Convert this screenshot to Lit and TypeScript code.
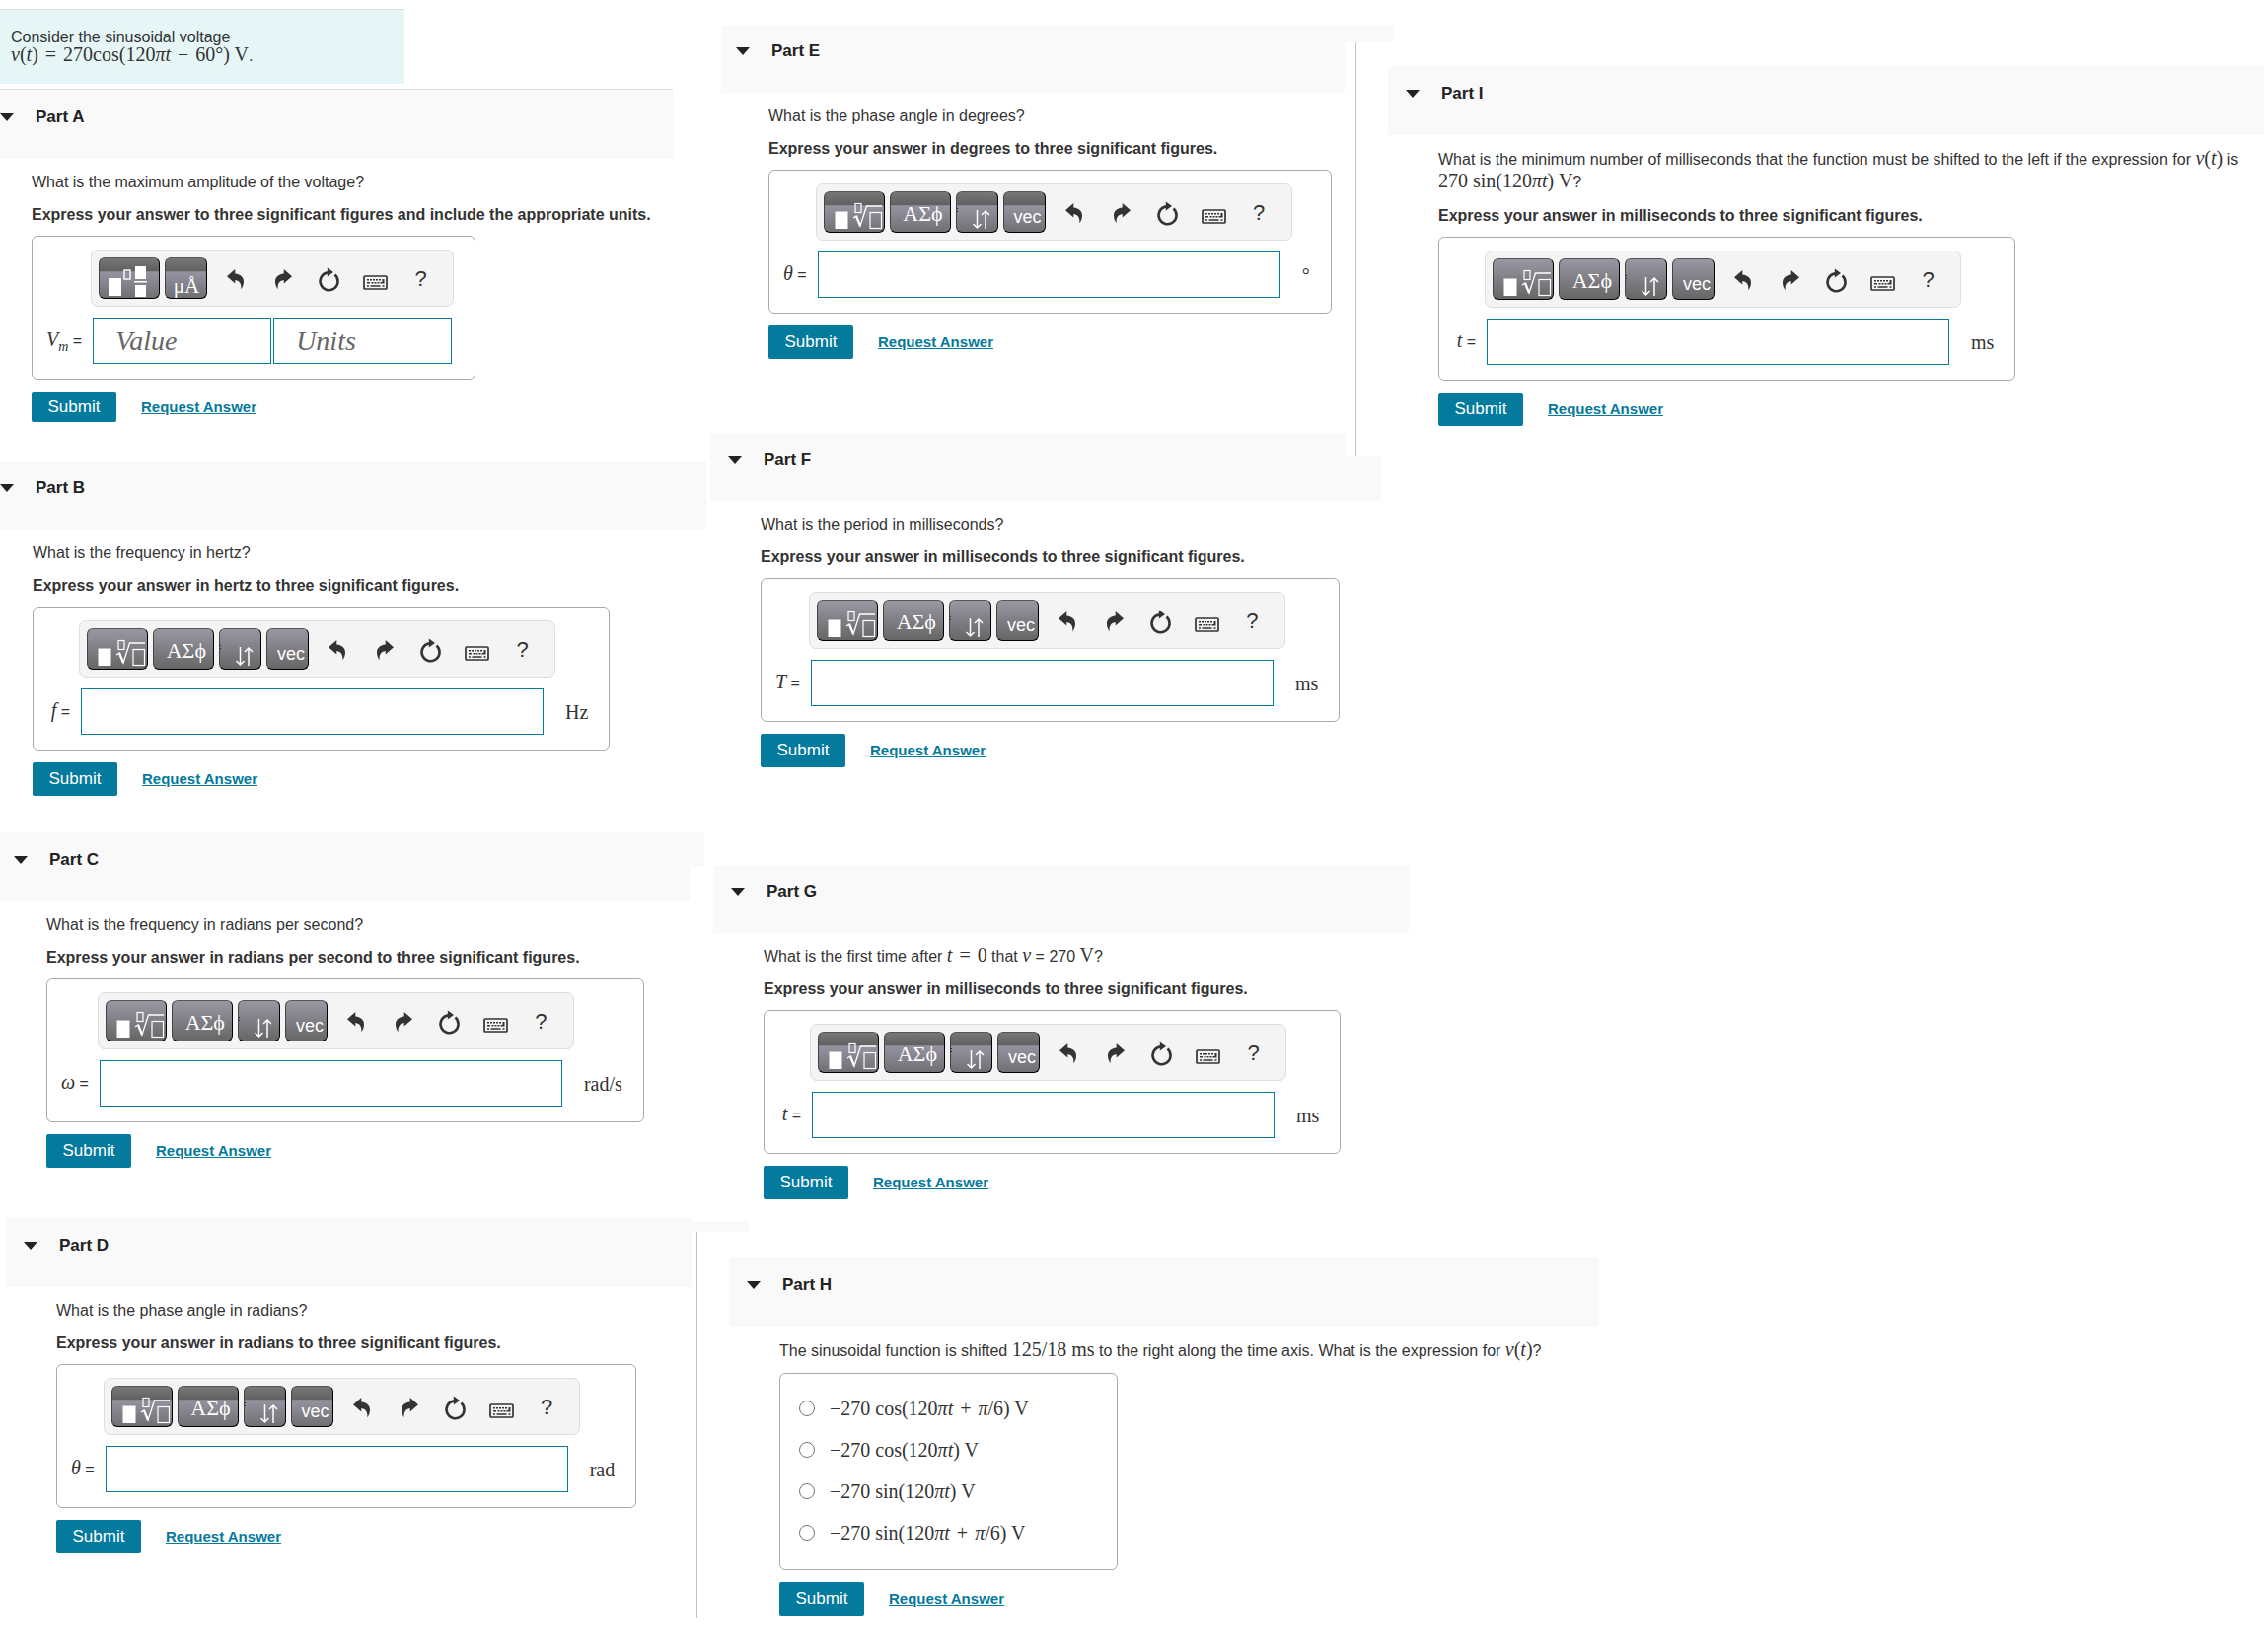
import { LitElement, html, svg, css, nothing, TemplateResult } from "lit";
import { classMap } from "lit/directives/class-map.js";
import { styleMap } from "lit/directives/style-map.js";

interface Part {
  id: string;
  /** Space above the part. */
  gap: number;
  /** Space left of the header band. */
  inset: number;
  /** Width of the header band, out of the width of its column. */
  band: number;
  /** Distance from the band's left edge to the text below it. */
  indent: number;
  question: TemplateResult;
  instruction?: string;
  symbol?: TemplateResult;
  unit?: TemplateResult;
  choices?: TemplateResult[];
  glossy?: boolean;
  tight?: boolean;
  tall?: boolean;
  ruled?: boolean;
  valueUnits?: boolean;
  /** Piece of band that sticks out to the right of the header. */
  tab?: { top: number; width: number; height: number };
  rule?: { left: number; top: number; height: number };
}

const COLUMN_1 = 720;
const COLUMN_2 = 687;
const COLUMN_3 = 888;

/** Relation or operator with the wider spacing of set mathematics. */
const op = (sign: string) => html`<span class="op">${sign}</span>`;

const column1: Part[] = [
  {
    id: "A", gap: 5, inset: 0, band: 682, indent: 32, glossy: true, ruled: true, valueUnits: true,
    question: html`What is the maximum amplitude of the voltage?`,
    instruction: "Express your answer to three significant figures and include the appropriate units.",
    symbol: html`<i>V<sub>m</sub></i>`,
  },
  {
    id: "B", gap: 39, inset: 0, band: 716, indent: 33,
    question: html`What is the frequency in hertz?`,
    instruction: "Express your answer in hertz to three significant figures.",
    symbol: html`<i>f</i>`,
    unit: html`Hz`,
  },
  {
    id: "C", gap: 37, inset: 0, band: 699, indent: 47,
    question: html`What is the frequency in radians per second?`,
    instruction: "Express your answer in radians per second to three significant figures.",
    symbol: html`<i>ω</i>`,
    unit: html`rad/s`,
    tab: { top: 0, width: 15, height: 35 },
  },
  {
    id: "D", gap: 51, inset: 6, band: 695, indent: 51, glossy: true,
    question: html`What is the phase angle in radians?`,
    instruction: "Express your answer in radians to three significant figures.",
    symbol: html`<i>θ</i>`,
    unit: html`rad`,
    tab: { top: 3, width: 58, height: 11 },
    rule: { left: 700, top: 14, height: 392 },
  },
];

const column2: Part[] = [
  {
    id: "E", gap: 26, inset: 11, band: 632, indent: 48, glossy: true, tight: true,
    question: html`What is the phase angle in degrees?`,
    instruction: "Express your answer in degrees to three significant figures.",
    symbol: html`<i>θ</i>`,
    unit: html`°`,
    tab: { top: 0, width: 49, height: 17 },
    rule: { left: 643, top: 17, height: 420 },
  },
  {
    id: "F", gap: 76, inset: 0, band: 643, indent: 51, tight: true,
    question: html`What is the period in milliseconds?`,
    instruction: "Express your answer in milliseconds to three significant figures.",
    symbol: html`<i>T</i>`,
    unit: html`ms`,
    tab: { top: 22, width: 37, height: 46 },
  },
  {
    id: "G", gap: 100, inset: 3, band: 705, indent: 51, glossy: true, tight: true,
    question: html`What is the first time after <span class="math"><i>t</i>${op("=")}0</span> that
      <span class="math"><i>v</i></span> = 270 <span class="math">V</span>?`,
    instruction: "Express your answer in milliseconds to three significant figures.",
    symbol: html`<i>t</i>`,
    unit: html`ms`,
  },
  {
    id: "H", gap: 59, inset: 19, band: 882, indent: 51, tall: true,
    question: html`The sinusoidal function is shifted <span class="math">125/18 ms</span> to the right along the
      time axis. What is the expression for <span class="math"><i>v</i>(<i>t</i>)</span>?`,
    choices: [
      html`−270 cos(120<i>πt</i>${op("+")}<i>π</i>/6) V`,
      html`−270 cos(120<i>πt</i>) V`,
      html`−270 sin(120<i>πt</i>) V`,
      html`−270 sin(120<i>πt</i>${op("+")}<i>π</i>/6) V`,
    ],
  },
];

const column3: Part[] = [
  {
    id: "I", gap: 67, inset: 0, band: 888, indent: 51, tall: true,
    question: html`What is the minimum number of milliseconds that the function must be shifted to the left if the
      expression for <span class="math"><i>v</i>(<i>t</i>)</span> is<br />
      <span class="math">270 sin(120<i>πt</i>) V</span>?`,
    instruction: "Express your answer in milliseconds to three significant figures.",
    symbol: html`<i>t</i>`,
    unit: html`ms`,
  },
];

const icons = {
  undo: svg`<path d="M15 20.3 23.3 13v4.6C29 18.2 32.3 21.5 32 26c-.1 2.9-1.2 5.2-2.7 7.2.6-4.4-.9-8.7-6-9.3v3.7z"/>`,
  redo: svg`<path d="M34 20.3 25.7 13v4.6C20 18.2 16.7 21.5 17 26c.1 2.9 1.2 5.2 2.7 7.2-.6-4.4.9-8.7 6-9.3v3.7z"/>`,
  reset: svg`<path d="M30.5 18.5A9 9 0 1 1 23 16.4" fill="none" stroke="currentColor" stroke-width="2.6"/><path d="M22.8 11.5 29 16l-6.2 4.5z"/>`,
  keyboard: svg`<rect x="13" y="20" width="23" height="13" rx="1" fill="none" stroke="currentColor" stroke-width="1.7"/>
    <path d="M16 23h2v1.5h-2zM19 23h2v1.5h-2zM22 23h2v1.5h-2zM25 23h2v1.5h-2zM28 23h2v1.5h-2zM31.5 23h2v4.5h-4v-1.5h2zM16 26h3v1.5h-3zM20.5 26h2v1.5h-2zM23.5 26h2v1.5h-2zM26.5 26h2v1.5h-2zM16 29.2h2v1.5h-2zM19.5 29.2h10v1.5h-10zM31.5 29.2h2v1.5h-2z"/>`,
};

class MathToolbar extends LitElement {
  static properties = {
    glossy: { type: Boolean },
    units: { type: Boolean },
  };

  declare glossy: boolean;
  declare units: boolean;

  static styles = css`
    :host {
      display: block;
    }
    .bar {
      box-sizing: border-box;
      display: flex;
      width: max-content;
      height: 58px;
      padding: 7px 9px 0 7px;
      border: 1px solid #dedede;
      border-radius: 7px;
      background: #f4f4f4;
    }
    button {
      flex: none;
      box-sizing: border-box;
      margin: 0;
      padding: 0;
      height: 42px;
      font: inherit;
      cursor: pointer;
    }
    .key {
      display: flex;
      align-items: flex-end;
      justify-content: flex-end;
      margin-right: 5px;
      border: 1px solid #000;
      border-top-color: #555;
      border-left-color: #444;
      border-radius: 6px;
      background: linear-gradient(#9a97a3, #666);
      color: #fff;
    }
    .glossy .key {
      background: linear-gradient(#777, #606060 33%, #9693a0 34%, #707073);
    }
    .wide {
      width: 62px;
    }
    .narrow {
      width: 43px;
    }
    .greek {
      padding: 0 7px 6px 0;
      font: 22px/24px "Liberation Serif", serif;
    }
    .angstrom {
      padding: 0 7px 0 0;
      font: 21px/24px "Liberation Serif", serif;
    }
    .vec {
      padding: 0 3px 5px 0;
      font: 18px/20px "Liberation Sans", sans-serif;
    }
    .tool {
      width: 47px;
      border: 0;
      background: none;
      color: #333;
    }
    .help {
      padding-top: 2px;
      font: 22px/24px "Liberation Sans", sans-serif;
    }
    svg {
      display: block;
      flex: none;
      fill: currentColor;
    }
  `;

  private tool(label: string, icon: unknown) {
    return html`<button class="tool" type="button" aria-label=${label}>
      <svg width="47" height="42" viewBox="0 1 47 42">${icon}</svg>
    </button>`;
  }

  private unitKeys() {
    return html`
      <button class="key wide" type="button" aria-label="Templates">
        <svg width="60" height="40" viewBox="1 1 60 40">
          <path d="M10 21h13v18H10zM37 9h11v13H37zM37 28h11v12H37zM36 24h13v1.5H36z" />
          <rect x="26" y="13" width="6" height="9" fill="none" stroke="currentColor" stroke-width="1.4" />
        </svg>
      </button>
      <button class="key narrow angstrom" type="button" aria-label="Units">μÅ</button>
    `;
  }

  private formulaKeys() {
    return html`
      <button class="key wide" type="button" aria-label="Templates">
        <svg width="60" height="40" viewBox="1 1 60 40">
          <path d="M11.500 20.500h13v17.500h-13z" />
          <g fill="none" stroke="currentColor" stroke-width="1.2">
            <rect x="32" y="12.5" width="6" height="9" />
            <path d="M30 27 33 25l4 10L43.5 15H59" stroke-width="1.3" />
            <path d="M33 25l4 10" stroke-width="2.2" />
            <rect x="47" y="21.5" width="11.5" height="16" />
          </g>
        </svg>
      </button>
      <button class="key wide greek" type="button" aria-label="Greek letters">ΑΣϕ</button>
      <button class="key narrow" type="button" aria-label="Arrows">
        <svg width="41" height="40" viewBox="1 1 41 40">
          <path d="M1 17h1v1H1zM1 20h1v1H1z" fill="#222" />
          <path
            d="M21.5 19v18M17.5 33l4 4 4-4M30 38V20M26 24l4-4 4 4"
            fill="none" stroke="currentColor" stroke-width="1.5"
          />
        </svg>
      </button>
      <button class="key narrow vec" type="button" aria-label="Vector">vec</button>
    `;
  }

  render() {
    return html`
      <div class=${classMap({ bar: true, glossy: this.glossy })} role="toolbar" aria-label="Math tools">
        ${this.units ? this.unitKeys() : this.formulaKeys()}
        ${this.tool("Undo", icons.undo)} ${this.tool("Redo", icons.redo)} ${this.tool("Reset", icons.reset)}
        ${this.tool("Keyboard shortcuts", icons.keyboard)}
        <button class="tool help" type="button" aria-label="Help">?</button>
      </div>
    `;
  }
}
customElements.define("math-toolbar", MathToolbar);

class AppRoot extends LitElement {
  static styles = css`
    :host {
      display: block;
      color: #333;
      background: #fff;
      font: 16px/22px "Liberation Sans", Arial, sans-serif;
    }
    .page {
      display: grid;
      grid-template-columns: minmax(0, 720fr) minmax(0, 687fr) minmax(0, 888fr);
      align-items: start;
      overflow: hidden;
      padding-bottom: 32px;
    }
    .column {
      display: flex;
      flex-direction: column;
    }
    .intro {
      box-sizing: border-box;
      width: 57%;
      margin: 9px 0 0;
      padding: 18px 11px 10px;
      border-top: 1px solid #ddd;
      background: #e6f6f7;
      line-height: 19px;
      min-height: 76px;
    }
    .math {
      font-family: "Liberation Serif", "Times New Roman", serif;
      font-size: 20px;
      line-height: 20px;
      white-space: nowrap;
    }
    p .math {
      line-height: 0;
    }
    .op {
      padding: 0 7px;
    }
    sub {
      font-size: 14px;
      line-height: 0;
    }
    .part {
      position: relative;
    }
    .head {
      box-sizing: border-box;
      display: flex;
      align-items: flex-end;
      height: 70px;
      padding-bottom: 32px;
      background: #f9f9f9;
    }
    .tight .head {
      height: 68px;
    }
    .ruled .head {
      height: 71px;
      border-top: 1px solid #ddd;
    }
    .tab,
    .rule {
      position: absolute;
    }
    .tab {
      background: #f9f9f9;
    }
    .rule {
      width: 1px;
      background: #b8c6d0;
    }
    h2 {
      margin: 0;
      font-size: 17px;
      line-height: 20px;
      color: #222;
    }
    .toggle {
      display: flex;
      align-items: center;
      gap: 22px;
      margin: 0;
      padding: 0;
      border: 0;
      background: none;
      color: inherit;
      font: inherit;
      cursor: pointer;
    }
    .arrow {
      width: 14px;
      height: 8px;
      fill: #222;
    }
    .body {
      display: flex;
      flex-direction: column;
      align-items: flex-start;
      gap: 11px;
      padding-top: 13px;
    }
    p {
      margin: 0;
      white-space: nowrap;
    }
    .tall .question {
      padding-bottom: 1px;
      line-height: 23px;
    }
    .instruction {
      font-weight: bold;
    }
    .answer,
    .choices {
      box-sizing: border-box;
      margin: -1px 0 0;
      border: 1px solid #aaa;
      border-radius: 6px;
    }
    .answer {
      display: grid;
      grid-template-columns: auto auto auto;
      align-items: center;
      justify-content: start;
      row-gap: 11px;
      padding: 13px 21px 15px 14px;
    }
    .tools {
      grid-column: 2 / -1;
      margin-left: -2px;
    }
    .symbol {
      box-sizing: border-box;
      grid-column: 1;
      min-width: 34px;
      padding-right: 11px;
      text-align: right;
      white-space: nowrap;
    }
    .fields {
      display: flex;
      gap: 2px;
    }
    .field {
      box-sizing: border-box;
      width: 469px;
      height: 47px;
      margin: 0;
      padding: 0 22px;
      border: 1px solid #047a9c;
      border-radius: 0;
      background: #fff;
      color: #333;
      font: 20px "Liberation Serif", serif;
    }
    .half {
      width: 181px;
      font: italic 28px "Liberation Serif", "Times New Roman", serif;
    }
    .field::placeholder {
      color: #666;
      opacity: 1;
    }
    .unit {
      padding-left: 22px;
    }
    .choices {
      min-width: 343px;
      padding: 14px 19px 16px;
    }
    .choice {
      display: flex;
      align-items: center;
      gap: 15px;
      height: 42px;
    }
    .choice input {
      appearance: none;
      box-sizing: border-box;
      width: 16px;
      height: 16px;
      margin: 0;
      border: 1px solid #767676;
      border-radius: 50%;
      background: #fff;
    }
    .choice input:checked {
      border-width: 5px;
      border-color: #047a9c;
    }
    .actions {
      display: flex;
      align-items: center;
      gap: 25px;
      margin-top: 1px;
    }
    .submit {
      width: 86px;
      height: 34px;
      margin: 0;
      padding: 0;
      border: 0;
      border-radius: 2px;
      background: #047a9c;
      color: #fff;
      font: 17px/20px "Liberation Sans", Arial, sans-serif;
      cursor: pointer;
    }
    .ruled .submit {
      height: 31px;
    }
    .request {
      color: #047a9c;
      font-size: 15px;
      font-weight: bold;
      line-height: 20px;
    }
  `;

  private renderFields(part: Part) {
    const id = `answer-${part.id}`;
    return html`
      <div class="answer">
        <math-toolbar class="tools" ?glossy=${part.glossy} ?units=${part.valueUnits}></math-toolbar>
        <label class="symbol" for=${id}><span class="math">${part.symbol}</span> =</label>
        ${part.valueUnits
          ? html`<div class="fields">
              <input class="field half" id=${id} type="text" placeholder="Value" />
              <input class="field half" type="text" placeholder="Units" aria-label="Units" />
            </div>`
          : html`<input class="field" id=${id} type="text" />`}
        ${part.unit ? html`<span class="math unit">${part.unit}</span>` : nothing}
      </div>
    `;
  }

  private renderChoices(part: Part) {
    return html`
      <fieldset class="choices" aria-label=${`Part ${part.id}`}>
        ${part.choices?.map(
          (choice) => html`<label class="choice">
            <input type="radio" name=${`choice-${part.id}`} />
            <span class="math">${choice}</span>
          </label>`,
        )}
      </fieldset>
    `;
  }

  private renderPart(part: Part, column: number) {
    const { tab, rule } = part;
    const bandWidth = `calc((100% + ${part.inset}px) * ${part.band / column})`;
    return html`
      <section
        class=${classMap({ part: true, tight: !!part.tight, tall: !!part.tall, ruled: !!part.ruled })}
        style=${styleMap({ marginTop: `${part.gap}px`, marginLeft: `${part.inset}px` })}
      >
        <header
          class="head"
          style=${styleMap({ width: bandWidth, paddingLeft: `${Math.max(0, part.indent - 33)}px` })}
        >
          <h2>
            <button class="toggle" type="button" aria-expanded="true">
              <svg class="arrow" viewBox="0 0 14 8"><path d="M0 0h14L7 8z" /></svg>
              <span>Part ${part.id}</span>
            </button>
          </h2>
        </header>
        ${tab
          ? html`<span
              class="tab"
              style=${styleMap({
                left: bandWidth,
                top: `${tab.top}px`,
                width: `${tab.width}px`,
                height: `${tab.height}px`,
              })}
            ></span>`
          : nothing}
        ${rule
          ? html`<span
              class="rule"
              style=${styleMap({ left: `${rule.left}px`, top: `${rule.top}px`, height: `${rule.height}px` })}
            ></span>`
          : nothing}
        <div class="body" style=${styleMap({ paddingLeft: `${part.indent}px` })}>
          <p class="question">${part.question}</p>
          ${part.instruction ? html`<p class="instruction">${part.instruction}</p>` : nothing}
          ${part.choices ? this.renderChoices(part) : this.renderFields(part)}
          <div class="actions">
            <button class="submit" type="submit">Submit</button>
            <a class="request" href="#part-${part.id}">Request Answer</a>
          </div>
        </div>
      </section>
    `;
  }

  render() {
    return html`
      <main class="page">
        <div class="column">
          <p class="intro">
            Consider the sinusoidal voltage<br />
            <span class="math"
              ><i>v</i>(<i>t</i>)${op("=")}270cos(120<i>πt</i>${op("−")}60°) V</span
            >.
          </p>
          ${column1.map((part) => this.renderPart(part, COLUMN_1))}
        </div>
        <div class="column">${column2.map((part) => this.renderPart(part, COLUMN_2))}</div>
        <div class="column">${column3.map((part) => this.renderPart(part, COLUMN_3))}</div>
      </main>
    `;
  }
}
customElements.define("app-root", AppRoot);
